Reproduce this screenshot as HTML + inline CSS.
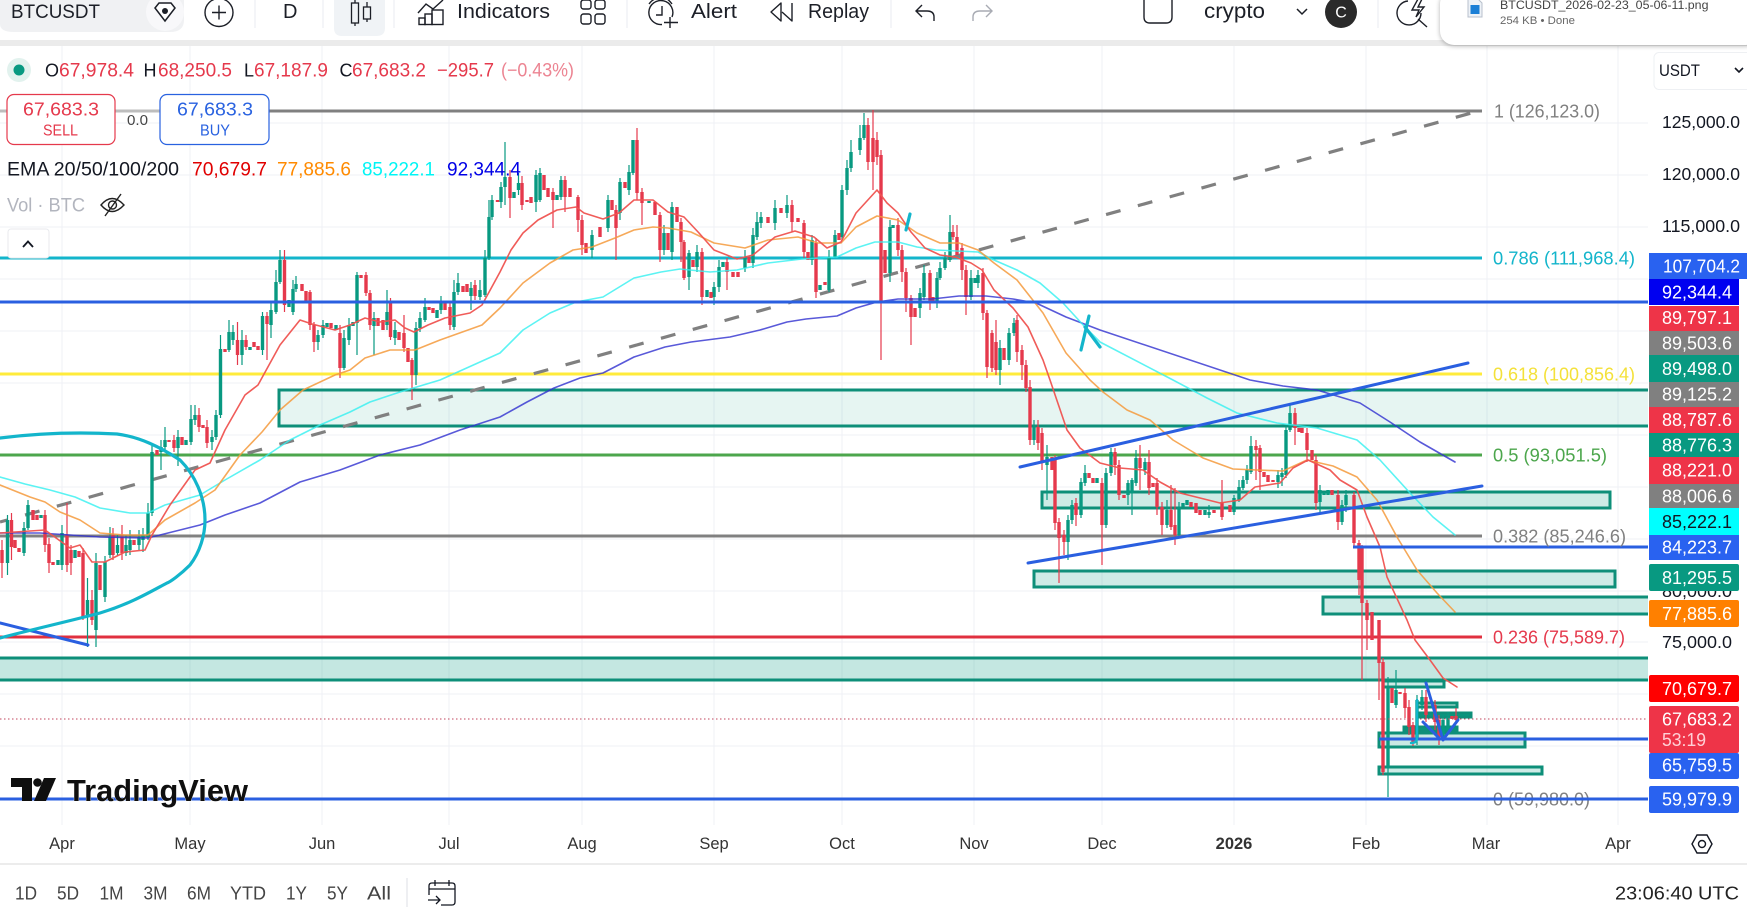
<!DOCTYPE html>
<html lang="en"><head><meta charset="utf-8"><title>BTCUSDT</title>
<style>
html,body{margin:0;padding:0;background:#fff;width:1747px;height:907px;overflow:hidden;font-family:"Liberation Sans",sans-serif}
svg{position:absolute;left:0;top:0}
text{font-family:"Liberation Sans",sans-serif;fill:#131722}
.ax{font-size:17.6px}.lb{font-size:18px;fill:#fff;font-weight:400}
.fib{font-size:18.5px}.leg{font-size:19px}.r{fill:#e5394c}
.tm{font-size:16.5px;fill:#333}.bt{font-size:18px;fill:#444}
.tb{font-size:20px;fill:#1c1f27}
#pop{position:absolute;left:1440px;top:-10px;width:320px;height:55px;background:#fff;border-radius:14px;box-shadow:0 1px 5px rgba(0,0,0,.3)}
#pop .a{position:absolute;left:60px;top:8px;font-size:12.4px;color:#444;white-space:nowrap}
#pop .b{position:absolute;left:60px;top:25px;font-size:11.4px;color:#666;white-space:nowrap}
</style></head><body>
<svg width="1747" height="907" viewBox="0 0 1747 907" xmlns="http://www.w3.org/2000/svg">
<rect width="1747" height="907" fill="#fff"/>
<!-- grid -->
<path stroke="#eff1f5" stroke-width="1" fill="none" d="M62 46V825M190 46V825M322 46V825M449 46V825M582 46V825M714 46V825M842 46V825M974 46V825M1102 46V825M1234 46V825M1366 46V825M1487 46V825M1618 46V825M0 123H1648M0 175H1648M0 227H1648M0 279H1648M0 331H1648M0 383H1648M0 435H1648M0 487H1648M0 539H1648M0 591H1648M0 642H1648M0 694H1648M0 746H1648"/>
<!-- top bar band -->
<rect x="0" y="40" width="1747" height="6" fill="#ebebeb"/>
<path d="M0 0H184V20Q184 32 170 32H14Q0 32 0 24Z" fill="#f0f1f3"/>
<!-- fib lines -->
<g fill="none" stroke-width="3">
<path d="M0 111H7M115 111H160" stroke="#bdbdbd"/>
<path d="M269 111H1482" stroke="#808080"/>
<path d="M0 258H1482" stroke="#13b5cb"/>
<path d="M0 374H1482" stroke="#ffeb3b"/>
<path d="M0 455H1482" stroke="#4ca64c"/>
<path d="M0 536H1482" stroke="#808080"/>
<path d="M0 637H1482" stroke="#e0303f"/>
</g>
<!-- rects -->
<g stroke="#0e8f79" stroke-width="3">
<rect x="279" y="390" width="1371" height="36" fill="#089981" fill-opacity=".1"/>
<rect x="1042" y="492" width="568" height="16" fill="#089981" fill-opacity=".2"/>
<rect x="1034" y="571" width="581" height="16" fill="#089981" fill-opacity=".2"/>
<rect x="1323" y="597" width="327" height="17" fill="#089981" fill-opacity=".2"/>
<rect x="-5" y="658" width="1655" height="22" fill="#089981" fill-opacity=".24"/>
<rect x="1383" y="681" width="61" height="6" fill="#089981" fill-opacity=".2"/>
<rect x="1417" y="703" width="40" height="4" fill="#089981" fill-opacity=".2"/>
<rect x="1417" y="713" width="54" height="4" fill="#089981"/>
<rect x="1404" y="727" width="53" height="4" fill="#089981"/>
<rect x="1379" y="733" width="146" height="14" fill="#089981" fill-opacity=".22"/>
<rect x="1379" y="767" width="163" height="7" fill="#089981" fill-opacity=".2"/>
</g>
<path d="M0 522L1475 112" stroke="#808080" stroke-width="3.2" stroke-dasharray="15 18" stroke-dashoffset="7" fill="none"/>
<!-- wicks green -->
<path fill="none" stroke="#089981" stroke-width="1.2" d="M7.5 515V575M24 522V556M28 500V530M62 525V570M87.5 578V647M96 553V647M105 556V602M110 527V558M117.5 535V556M126 535V556M130 530V555M139 530V550M143 528V552M148 503V540M152 445V516M161 440V470M165 427V450M178 430V466M191 405V445M195 405V425M212 430V450M216 410V440M220.5 335V418M229 320V352M233 325V345M242 330V365M262.5 312V355M271 302V338M276 270V314M280 250V284M293 280V315M296 276V292M318 330V350M323 320V338M344 330V370M349 318V345M357 272V355M374 312V355M387 290V330M395 322V345M416 322V385M420 312V332M425 298V322M441 296V314M454 280V330M458 273V295M471 282V310M480 280V300M485 250V297M489 200V260M492 195V220M501 182V208M505 142V205M518.5 173V195M536 170V212M540 168V202M561 176V200M592 230V258M608 195V232M620 178V220M629 165V195M633 150V175M664 225V255M672 202V260M689 250V290M697 245V272M714 282V305M719 260V292M745 250V272M753 228V268M757 212V240M761 212V228M775 200V230M787 195V218M812 235V265M829 250V292M835 230V258M842 185V240M847 160V195M851 140V172M860 125V155M864 113V140M890 220V282M920 288V318M924 265V300M937 272V308M940 262V280M945 252V270M950 215V262M971 270V300M978 270V288M1000 340V385M1009 328V365M1014 318V336M1034 420V445M1047 445V500M1068 515V560M1072 500V524M1081 478V518M1085 465V486M1106 468V528M1111 448V476M1128 480V505M1132 478V515M1136 450V486M1145 458V475M1167 500V528M1179 502V538M1209 505V518M1234 495V515M1239 480V502M1243 476V490M1247 465V484M1251 436V474M1278 470V488M1282 468V486M1286 425V478M1290 405V432M1320 485V512M1342 500V525M1346 490V512M1396 670V708M1388 677V797M1417 695V745M1422 690V710M1443 715V740M1448 712V735"/>
<!-- wicks red -->
<path fill="none" stroke="#e5394c" stroke-width="1.2" d="M2 540V578M11.5 513V560M45 510V552M49 538V573M67 503V572M71 545V575M83 548V620M92 590V625M113 528V560M122 525V560M174 435V452M199 408V432M207 420V448M237.5 322V365M246 335V350M267 312V360M284.5 250V312M310 290V330M314 322V352M340 325V378M366 272V296M370 290V330M390.5 298V340M404 315V352M412 358V400M450 302V330M475 280V300M510 170V218M522 176V210M553 188V228M565 176V212M578 195V232M582 215V255M616 205V260M637 128V200M642 188V225M660 212V262M681 218V262M684 240V280M702 248V305M727 258V290M792 200V232M804 220V258M816 238V298M868 118V170M873 110V190M877 132V165M881 150V360M898 218V256M902 245V282M906 268V312M911 295V345M930 270V310M953 225V240M957 225V255M962 243V280M966 265V315M983 268V320M987 310V378M992 330V372M996 320V375M1017 315V362M1022 345V380M1026 360V392M1030 380V445M1038 420V450M1042 428V470M1055 455V530M1059 518V583M1064 530V555M1076 498V526M1102 478V565M1115 448V475M1119 460V500M1140 445V490M1149 450V495M1157 478V515M1162 502V535M1171 485V530M1175 488V545M1222 480V520M1256 440V480M1260 445V490M1295 408V445M1307 428V462M1316 455V510M1338 490V530M1354 492V548M1359 540V595M1362 545V680M1367 600V650M1379 620V700M1383 658V775M1405 688V718M1409 700V735M1413 722V746M1426 690V722M1435 700V730M1439 715V745M1456 708V724"/>
<!-- bodies green -->
<path fill="none" stroke="#089981" stroke-width="3.4" d="M7.5 520V563M24 528V553M28 505V528M41 515V518M58 560V565M62 533V565M75 550V558M87.5 600V617M96 563V630M105 562V597M110 537V555M117.5 545V553M126 545V553M130 540V550M139 537V545M143 535V540M148 513V537M152 452V513M161 447V452M165 440V447M178 437V448M186 440V445M191 419V442M195 415V420M212 437V442M216 415V437M220.5 349V415M229 332V350M233 332V340M242 340V355M250 347V350M262.5 316V350M271 310V325M276 282V312M280 260V282M289 300V307M293 289V312M296 284V289M318 335V342M323 325V335M327 323V327M336 325V330M344 338V368M349 325V340M353 322V326M357 275V323M374 318V326M387 312V325M395 330V338M416 328V375M420 318V328M425 307V320M437 310V318M441 303V310M454 292V327M458 283V292M471 288V296M480 290V297M485 258V295M489 217V258M492 200V217M501 187V202M505 177V187M514 192V198M518.5 183V190M536 175V202M540 173V200M557 195V200M561 180V197M592 235V250M608 200V228M620 182V213M629 172V190M633 140V173M649 201V203M664 233V250M672 207V252M689 253V277M697 252V267M707 290V297M714 287V297M719 267V287M723 262V267M745 257V268M753 235V263M757 222V237M761 217V223M775 208V223M787 205V213M812 240V260M820 285V290M829 257V290M835 235V257M842 190V237M847 168V190M851 152V168M860 138V150M864 125V138M890 227V273M893 225V228M920 293V308M924 273V297M937 278V303M940 268V278M945 258V268M950 232V260M971 278V297M975 278V283M978 275V283M1000 348V370M1009 333V360M1014 323V333M1034 427V440M1047 457V465M1068 520V542M1072 505V520M1081 482V515M1085 473V483M1097 478V483M1106 473V525M1111 452V473M1128 483V495M1132 480V493M1136 458V483M1145 462V470M1167 510V525M1179 507V535M1183 503V507M1187 500V505M1205 510V515M1209 512V515M1234 498V512M1239 487V500M1243 480V488M1247 470V480M1251 446V472M1278 475V482M1282 473V477M1286 430V475M1290 413V430M1320 490V502M1324 492V495M1328 490V495M1342 505V522M1346 495V505M1388 688V768M1396 690V705M1417 700V740M1422 697V705M1443 720V740M1448 717V730"/>
<!-- bodies red -->
<path fill="none" stroke="#e5394c" stroke-width="3.4" d="M2 550V563M11.5 520V547M15 540V548M19 548V552M33 510V520M37 515V520M45 515V545M49 544V563M53 562V565M67 535V565M71 550V563M79 551V557M83 553V617M92 600V620M100 565V590M113 535V555M122 537V553M134 540V545M157 450V455M169 440V442M174 440V448M182 437V445M199 415V427M203 425V428M207 427V443M225 349V352M237.5 340V355M246 340V347M254 342V347M258 346V350M267 316V324M284.5 260V305M302 284V291M306 291V303M310 292V325M314 325V342M331 323V328M340 333V368M361 275V278M366 275V293M370 293V325M378 318V326M383 320V330M390.5 303V337M399 332V340M404 333V348M408 348V362M412 360V375M429 307V310M433 308V313M445 303V310M450 307V325M463 286V292M467 284V292M475 285V296M497.5 200V202M510 177V198M522 183V205M527 200V202M531 197V203M544 175V190M548 188V197M553 192V200M565 180V197M570 188V197M578 197V220M582 220V245M586 243V253M600 227V237M612 200V210M616 210V228M625 182V188M637 140V193M642 192V203M655 202V215M660 215V250M668 233V250M677 207V222M681 222V242M684 242V278M693 260V267M702 252V297M711 292V298M727 262V272M733 272V277M738 272V277M749 257V263M768 217V223M781 208V213M792 205V222M798 218V222M804 223V252M808 252V260M816 243V292M825 282V285M839 233V240M868 125V162M873 138V162M877 140V157M881 155V302M885 250V273M898 225V250M902 250V272M906 272V298M911 298V317M915 308V317M930 273V303M933 297V303M953 232V237M957 237V255M962 248V270M966 270V297M983 273V313M987 313V367M992 333V368M996 342V370M1004 348V360M1017 320V352M1022 350V365M1026 365V388M1030 387V440M1038 427V443M1042 433V463M1052 457V470M1055 460V523M1059 522V538M1064 535V542M1076 503V515M1089 473V478M1093 478V483M1102 483V525M1115 452V465M1119 465V495M1124 495V498M1140 458V468M1149 462V488M1153 483V487M1157 483V507M1162 507V525M1171 510V527M1175 525V535M1191 502V507M1196 503V513M1200 510V515M1214 510V513M1222 502V517M1230 505V512M1256 446V450M1260 448V472M1264 472V477M1268 475V482M1273 480V482M1295 413V428M1299 428V432M1302 428V433M1307 433V450M1312 450V460M1316 460V503M1332 490V495M1338 495V522M1354 495V543M1359 543V580M1362 547V603M1367 603V620M1372 612V640M1379 620V663M1383 662V772M1392 688V703M1400 692V694M1405 693V708M1409 707V727M1413 725V743M1426 697V715M1435 705V722M1439 720V737M1452 716V719M1456 716V720"/>
<!-- EMAs -->
<g fill="none" stroke-width="1.6" stroke-linejoin="round" stroke-linecap="round">
<path stroke="#2f2fd0" stroke-opacity=".8" d="M0 533L40 533 70 535 100 537 148 538 200 525 225 515 260 503 300 482 340 470 380 455 420 445 460 430 500 417 527 402 554 388 580 378 603 373 634 357 665 347 691 342 730 337 760 330 787 322 806 319 837 316 856 308 877 302 898 299 932 299 959 296 986 296 1013 299 1036 303 1066 317 1100 330 1250 380 1283 386 1317 390 1360 403 1390 422 1420 442 1455 462"/>
<path stroke="#33f0f0" stroke-opacity=".8" d="M0 477L25 484 50 490 75 497 100 508 130 513 148 513 165 505 200 495 225 480 260 460 290 440 320 425 350 412 370 402 400 392 440 380 480 362 500 353 523 330 550 313 576 302 603 297 634 278 661 272 680 269 710 272 737 270 768 263 802 259 837 257 856 248 875 242 898 242 917 247 936 250 978 252 994 260 1017 270 1040 283 1063 303 1085 327 1100 342 1173 380 1207 398 1237 413 1277 423 1317 428 1357 440 1380 460 1410 493 1433 517 1455 535"/>
<path stroke="#f59a3c" stroke-opacity=".85" d="M0 485L30 497 45 502 60 512 80 520 100 533 125 535 148 535 165 520 195 503 215 490 240 455 262 432 280 410 303 390 335 375 350 370 365 358 390 350 415 350 440 340 482 325 500 308 523 283 550 263 573 250 592 247 615 238 634 230 653 227 668 228 691 232 714 243 745 248 768 240 798 237 818 243 841 243 856 227 877 216 898 220 917 233 940 243 959 243 978 250 994 263 1017 280 1043 313 1066 353 1090 380 1103 392 1127 410 1150 420 1173 440 1203 458 1233 469 1283 471 1307 460 1333 466 1357 477 1377 500 1397 537 1417 570 1437 593 1455 612"/>
<path stroke="#ef5350" stroke-opacity=".95" d="M0 533L45 530 70 548 80 545 92 562 105 562 125 552 145 550 152 535 170 505 195 470 210 463 225 430 245 395 258 385 280 345 300 320 312 324 335 330 350 325 365 318 380 322 395 320 405 328 414 332 428 325 445 318 470 313 482 305 500 272 511 250 523 233 538 220 557 210 576 207 584 213 603 219 619 213 634 200 653 200 668 212 684 217 699 233 714 250 737 259 753 255 775 237 795 231 814 237 827 248 841 242 856 213 877 190 887 203 898 213 911 232 925 248 940 255 955 257 971 263 982 270 994 290 1013 308 1028 327 1043 360 1050 380 1067 430 1080 448 1100 463 1120 468 1143 470 1160 482 1180 493 1200 498 1220 503 1240 500 1255 487 1280 483 1293 468 1308 460 1330 470 1340 480 1357 490 1367 517 1380 547 1387 577 1407 620 1415 640 1430 660 1443 678 1457 687"/>
</g>
<!-- blue lines & drawings -->
<g fill="none" stroke="#2a5fe0" stroke-width="3" stroke-linecap="round">
<path d="M0 302H1648M1353 547H1648M1379 739H1648M0 799H1648" stroke-linecap="butt"/>
<path d="M1020 467L1468 363M1028 563L1482 486M0 623L88 645"/>
<path d="M1426 683L1443 740M1423 722L1440 739M1445 737L1458 720"/>
</g>
<path d="M0 719H1648" stroke="#c2465e" stroke-width="1" stroke-dasharray="1.5 2.5"/>
<g fill="none" stroke="#13b5cb" stroke-width="3.2" stroke-linecap="round">
<path d="M0 438C40 433 80 432 117 434C140 437 160 447 180 460C195 475 205 497 205 520C205 535 200 552 190 565C180 575 170 582 167 583C150 592 130 604 100 613C70 621 30 630 0 638"/>
<path d="M1089 316L1081 350M1085 327L1100 347M910 214L906 230"/>
<path d="M1417 700V738Q1417 743 1411 743" stroke-width="2.4"/>
</g>
<!-- TV logo -->
<g fill="#0f0f0f">
<path d="M11 778H32V801H22V787H11Z"/><circle cx="37.5" cy="782.5" r="4.3"/><path d="M44 778H56L46 801H34Z"/>
<text x="67" y="801" font-size="30.5" font-weight="700" textLength="181" lengthAdjust="spacingAndGlyphs" style="fill:#0f0f0f;paint-order:stroke;stroke:#fff;stroke-width:.6px">TradingView</text>
</g>
<!-- axis whitening -->
<rect x="1648" y="46" width="99" height="780" fill="#fff"/>
<rect x="0" y="826" width="1747" height="81" fill="#fff"/>
<path d="M0 864H1747" stroke="#e6e6e6" stroke-width="1.5"/>
<!-- toolbar -->
<circle cx="165" cy="12" r="19" fill="#f8f8fa"/>
<path d="M155 8L159 3H171L175 8L165 21Z" fill="#fff" stroke="#1c1f27" stroke-width="1.5"/><circle cx="165" cy="11" r="3" fill="#1c1f27"/>
<text x="11" y="18" style="font-size:19px" class="tb" textLength="89" lengthAdjust="spacingAndGlyphs">BTCUSDT</text>
<circle cx="219" cy="12.5" r="14" fill="none" stroke="#1c1f27" stroke-width="1.4"/><path d="M219 5.5V19.5M212 12.5H226" stroke="#1c1f27" stroke-width="1.4"/>
<path d="M255 0V28M323 0V28M394 0V28M891 0V28M1378 0V28" stroke="#eceef2" stroke-width="1.2"/>
<text x="283" y="18" class="tb">D</text>
<path d="M334 0H385V28Q385 36 377 36H342Q334 36 334 28Z" fill="#f0f3f6"/>
<path d="M355 0V26M367 2V22" stroke="#1c1f27" stroke-width="1.3"/><rect x="351.5" y="3" width="7" height="20" fill="#f0f3f6" stroke="#1c1f27" stroke-width="1.3"/><rect x="363.5" y="7" width="7" height="12" fill="#f0f3f6" stroke="#1c1f27" stroke-width="1.3"/>
<g fill="none" stroke="#1c1f27" stroke-width="1.4"><path d="M418 13L426 4L433 9L443 0"/><rect x="419" y="18" width="6" height="6.5"/><rect x="425" y="14" width="7" height="10.5"/><rect x="432" y="10" width="11" height="14.5"/></g>
<text x="457" y="18" class="tb" textLength="93" lengthAdjust="spacingAndGlyphs">Indicators</text>
<g fill="none" stroke="#1c1f27" stroke-width="1.4"><rect x="581" y="0" width="10" height="9" rx="2.5"/><rect x="595" y="0" width="10" height="9" rx="2.5"/><rect x="581" y="14" width="10" height="10" rx="2.5"/><rect x="595" y="14" width="10" height="10" rx="2.5"/></g>
<path d="M627 0V28" stroke="#eceef2" stroke-width="1.2"/>
<g fill="none" stroke="#1c1f27" stroke-width="1.4"><path d="M672 17A12 12 0 1 0 662 24.5"/><path d="M662 6V15H656"/><path d="M649 4Q652 0 655 -1M672 4Q669 0 667 -1"/><path d="M670 17V28M664 22.5H678"/></g>
<text x="691" y="18" class="tb" textLength="46" lengthAdjust="spacingAndGlyphs">Alert</text>
<g fill="none" stroke="#1c1f27" stroke-width="1.4" stroke-linejoin="round"><path d="M781 3V21L771 12Z"/><path d="M792 3V21L782 12"/></g>
<text x="808" y="18" class="tb" textLength="61" lengthAdjust="spacingAndGlyphs">Replay</text>
<path d="M934 21V17Q934 11 927 11H917M922 5L916 11L922 17" fill="none" stroke="#1c1f27" stroke-width="1.4"/>
<path d="M973 21V17Q973 11 980 11H991M986 5L992 11L986 17" fill="none" stroke="#a8abb3" stroke-width="1.4"/>
<path d="M1144 -2V17Q1144 23 1150 23H1166Q1172 23 1172 17V-2" fill="none" stroke="#1c1f27" stroke-width="1.4"/>
<text x="1204" y="18" class="tb" style="font-size:21px" textLength="61" lengthAdjust="spacingAndGlyphs">crypto</text>
<path d="M1297 9L1302 14L1307 9" fill="none" stroke="#1c1f27" stroke-width="1.5"/>
<circle cx="1341" cy="12" r="16" fill="#2a2a2a"/><text x="1341" y="17.500" text-anchor="middle" font-size="16" style="fill:#fff">C</text>
<g fill="none" stroke="#1c1f27" stroke-width="1.4"><path d="M1408 1A12 12 0 1 0 1421 13"/><path d="M1418 -1L1412 10H1419L1416 17L1424 7H1418L1422 -1"/><path d="M1418 19L1427 27"/></g>
<!-- legend -->
<circle cx="19" cy="70" r="12" fill="#e2f2ee"/><circle cx="19" cy="70" r="5.5" fill="#089981"/>
<text x="45" y="76.500" class="leg" style="font-size:18px">O</text><text x="59" y="76.500" class="leg r" textLength="75" lengthAdjust="spacingAndGlyphs">67,978.4</text>
<text x="143.500" y="76.500" class="leg" style="font-size:18px">H</text><text x="158" y="76.500" class="leg r" textLength="74" lengthAdjust="spacingAndGlyphs">68,250.5</text>
<text x="244" y="76.500" class="leg" style="font-size:18px">L</text><text x="254" y="76.500" class="leg r" textLength="74" lengthAdjust="spacingAndGlyphs">67,187.9</text>
<text x="339.500" y="76.500" class="leg" style="font-size:18px">C</text><text x="352" y="76.500" class="leg r" textLength="74" lengthAdjust="spacingAndGlyphs">67,683.2</text>
<text x="437" y="76.500" class="leg r" textLength="57" lengthAdjust="spacingAndGlyphs">−295.7</text><text x="501" y="76.500" class="leg r" textLength="73" lengthAdjust="spacingAndGlyphs" style="fill:#ec8492">(−0.43%)</text>
<rect x="7" y="94.500" width="108" height="50" rx="7" fill="#fff" stroke="#e5394c" stroke-width="1.2"/>
<text x="23" y="115.500" font-size="18.5" textLength="76" lengthAdjust="spacingAndGlyphs" class="r">67,683.3</text>
<text x="43" y="135.500" font-size="15.500" textLength="35" lengthAdjust="spacingAndGlyphs" class="r">SELL</text>
<text x="127" y="125" font-size="14.500" textLength="21" lengthAdjust="spacingAndGlyphs" style="fill:#444">0.0</text>
<rect x="160" y="94.500" width="109" height="50" rx="7" fill="#fff" stroke="#2962e0" stroke-width="1.2"/>
<text x="177" y="115.500" font-size="18.5" textLength="76" lengthAdjust="spacingAndGlyphs" style="fill:#2962e0">67,683.3</text>
<text x="200" y="135.500" font-size="15.500" textLength="30" lengthAdjust="spacingAndGlyphs" style="fill:#2962e0">BUY</text>
<text x="7" y="175.500" class="leg" textLength="172" lengthAdjust="spacingAndGlyphs">EMA 20/50/100/200</text>
<text x="192" y="175.500" class="leg" textLength="75" lengthAdjust="spacingAndGlyphs" style="fill:#e00000">70,679.7</text>
<text x="277" y="175.500" class="leg" textLength="74" lengthAdjust="spacingAndGlyphs" style="fill:#ff8a00">77,885.6</text>
<text x="362" y="175.500" class="leg" textLength="73" lengthAdjust="spacingAndGlyphs" style="fill:#00f5f5">85,222.1</text>
<text x="447" y="175.500" class="leg" textLength="74" lengthAdjust="spacingAndGlyphs" style="fill:#0000e6">92,344.4</text>
<text x="7" y="211.500" class="leg" textLength="78" lengthAdjust="spacingAndGlyphs" style="fill:#b2b5be">Vol · BTC</text>
<g fill="none" stroke="#222" stroke-width="1.4"><path d="M101 205Q112 192 124 205Q112 218 101 205Z"/><circle cx="112.500" cy="205" r="4"/><path d="M105 216L121 194"/></g>
<rect x="8" y="229" width="41" height="29" rx="3" fill="#fff" stroke="#e8eaee"/>
<path d="M23 247L28 241.500L33 247" fill="none" stroke="#131722" stroke-width="1.8"/>
<!-- fib labels -->
<text x="1494" y="117.500" class="fib" textLength="106" lengthAdjust="spacingAndGlyphs" style="fill:#808080">1 (126,123.0)</text>
<text x="1493" y="264.500" class="fib" textLength="142" lengthAdjust="spacingAndGlyphs" style="fill:#13b5cb">0.786 (111,968.4)</text>
<text x="1493" y="380.500" class="fib" textLength="142" lengthAdjust="spacingAndGlyphs" style="fill:#f4e13a">0.618 (100,856.4)</text>
<text x="1493" y="461.500" class="fib" textLength="114" lengthAdjust="spacingAndGlyphs" style="fill:#4ca64c">0.5 (93,051.5)</text>
<text x="1493" y="542.500" class="fib" textLength="133" lengthAdjust="spacingAndGlyphs" style="fill:#808080">0.382 (85,246.6)</text>
<text x="1493" y="643.500" class="fib" textLength="132" lengthAdjust="spacingAndGlyphs" style="fill:#e5394c">0.236 (75,589.7)</text>
<text x="1493" y="805.500" class="fib" textLength="97" lengthAdjust="spacingAndGlyphs" style="fill:#808080">0 (59,980.0)</text>
<path d="M1493 799H1590" stroke="#2a5fe0" stroke-width="3"/>
<!-- price axis -->
<rect x="1654" y="52.500" width="100" height="37" rx="5" fill="#fff" stroke="#eef0f3"/>
<text x="1659" y="76" font-size="17" textLength="41" lengthAdjust="spacingAndGlyphs">USDT</text>
<path d="M1735 68L1739 72L1743 68" fill="none" stroke="#131722" stroke-width="1.6"/>
<text x="1662" y="128" class="ax" textLength="78" lengthAdjust="spacingAndGlyphs">125,000.0</text>
<text x="1662" y="180" class="ax" textLength="78" lengthAdjust="spacingAndGlyphs">120,000.0</text>
<text x="1662" y="232" class="ax" textLength="78" lengthAdjust="spacingAndGlyphs">115,000.0</text>
<text x="1662" y="597" class="ax" textLength="70" lengthAdjust="spacingAndGlyphs">80,000.0</text>
<text x="1662" y="648" class="ax" textLength="70" lengthAdjust="spacingAndGlyphs">75,000.0</text>
<g>
<rect x="1649" y="253" width="98" height="26" fill="#2962f0"/><text x="1663" y="272.500" class="lb" textLength="77" lengthAdjust="spacingAndGlyphs">107,704.2</text>
<rect x="1649" y="279" width="90" height="26" fill="#0000f0"/><text x="1662" y="298.500" class="lb" textLength="70" lengthAdjust="spacingAndGlyphs">92,344.4</text>
<rect x="1649" y="306" width="90" height="25" fill="#ee3448"/><text x="1662" y="324" class="lb" textLength="70" lengthAdjust="spacingAndGlyphs">89,797.1</text>
<rect x="1649" y="331" width="90" height="24" fill="#808080"/><text x="1662" y="349.500" class="lb" textLength="70" lengthAdjust="spacingAndGlyphs">89,503.6</text>
<rect x="1649" y="355" width="90" height="27" fill="#089981"/><text x="1662" y="375" class="lb" textLength="70" lengthAdjust="spacingAndGlyphs">89,498.0</text>
<rect x="1649" y="382" width="90" height="25" fill="#808080"/><text x="1662" y="400.500" class="lb" textLength="70" lengthAdjust="spacingAndGlyphs">89,125.2</text>
<rect x="1649" y="407" width="90" height="26" fill="#ee3448"/><text x="1662" y="426" class="lb" textLength="70" lengthAdjust="spacingAndGlyphs">88,787.6</text>
<rect x="1649" y="433" width="90" height="24" fill="#089981"/><text x="1662" y="451.500" class="lb" textLength="70" lengthAdjust="spacingAndGlyphs">88,776.3</text>
<rect x="1649" y="457" width="90" height="27" fill="#ee3448"/><text x="1662" y="476.500" class="lb" textLength="70" lengthAdjust="spacingAndGlyphs">88,221.0</text>
<rect x="1649" y="484" width="90" height="24" fill="#808080"/><text x="1662" y="502.500" class="lb" textLength="70" lengthAdjust="spacingAndGlyphs">88,006.6</text>
<rect x="1649" y="508" width="90" height="27" fill="#00ffff"/><text x="1662" y="528" class="lb" textLength="70" lengthAdjust="spacingAndGlyphs" style="fill:#131722">85,222.1</text>
<rect x="1649" y="535" width="90" height="25" fill="#2962f0"/><text x="1662" y="553.500" class="lb" textLength="70" lengthAdjust="spacingAndGlyphs">84,223.7</text>
<rect x="1649" y="564" width="90" height="27" rx="2" fill="#089981"/><text x="1662" y="584" class="lb" textLength="70" lengthAdjust="spacingAndGlyphs">81,295.5</text>
<rect x="1649" y="600" width="90" height="27" rx="2" fill="#ff8000"/><text x="1662" y="620" class="lb" textLength="70" lengthAdjust="spacingAndGlyphs">77,885.6</text>
<rect x="1649" y="675" width="90" height="27" rx="2" fill="#ff0000"/><text x="1662" y="695" class="lb" textLength="70" lengthAdjust="spacingAndGlyphs">70,679.7</text>
<rect x="1649" y="706" width="90" height="47" rx="2" fill="#ee3448"/><text x="1662" y="725.500" class="lb" textLength="70" lengthAdjust="spacingAndGlyphs">67,683.2</text><text x="1662" y="746" class="lb" textLength="44" lengthAdjust="spacingAndGlyphs" style="fill:#ffd0d6">53:19</text>
<rect x="1649" y="753" width="90" height="26" rx="2" fill="#2962f0"/><text x="1662" y="771.500" class="lb" textLength="70" lengthAdjust="spacingAndGlyphs">65,759.5</text>
<rect x="1649" y="786" width="90" height="27" rx="2" fill="#2962f0"/><text x="1662" y="805.500" class="lb" textLength="70" lengthAdjust="spacingAndGlyphs">59,979.9</text>
</g>
<!-- time axis -->
<g text-anchor="middle">
<text x="62" y="849" class="tm">Apr</text><text x="190" y="849" class="tm">May</text><text x="322" y="849" class="tm">Jun</text><text x="449" y="849" class="tm">Jul</text><text x="582" y="849" class="tm">Aug</text><text x="714" y="849" class="tm">Sep</text><text x="842" y="849" class="tm">Oct</text><text x="974" y="849" class="tm">Nov</text><text x="1102" y="849" class="tm">Dec</text><text x="1234" y="849" class="tm" font-weight="700">2026</text><text x="1366" y="849" class="tm">Feb</text><text x="1486" y="849" class="tm">Mar</text><text x="1618" y="849" class="tm">Apr</text>
</g>
<path d="M1692 844L1697 835H1707L1712 844L1707 853H1697Z" fill="none" stroke="#131722" stroke-width="1.4"/><circle cx="1702" cy="844" r="3.5" fill="none" stroke="#131722" stroke-width="1.4"/>
<!-- bottom -->
<text x="15" y="899.500" class="bt" textLength="22" lengthAdjust="spacingAndGlyphs">1D</text><text x="57" y="899.500" class="bt" textLength="22" lengthAdjust="spacingAndGlyphs">5D</text><text x="99.500" y="899.500" class="bt" textLength="24" lengthAdjust="spacingAndGlyphs">1M</text><text x="143.500" y="899.500" class="bt" textLength="24" lengthAdjust="spacingAndGlyphs">3M</text><text x="187" y="899.500" class="bt" textLength="24" lengthAdjust="spacingAndGlyphs">6M</text><text x="230" y="899.500" class="bt" textLength="36" lengthAdjust="spacingAndGlyphs">YTD</text><text x="286" y="899.500" class="bt" textLength="21" lengthAdjust="spacingAndGlyphs">1Y</text><text x="327" y="899.500" class="bt" textLength="21" lengthAdjust="spacingAndGlyphs">5Y</text><text x="367" y="899.500" class="bt" textLength="24" lengthAdjust="spacingAndGlyphs">All</text>
<path d="M407 878V907" stroke="#e2e4e8" stroke-width="1.2"/>
<g fill="none" stroke="#131722" stroke-width="1.3"><path d="M429 895V886Q429 883 432 883H452Q455 883 455 886V902Q455 905 452 905H441"/><path d="M429 889H455M435 880V886M449 880V886"/><path d="M428 900H440M436 896L440 900L436 904"/></g>
<text x="1615" y="899.500" font-size="18.5" textLength="124" lengthAdjust="spacingAndGlyphs" style="fill:#222">23:06:40 UTC</text>
</svg>
<div id="pop"><svg width="16" height="20" style="left:27px;top:8px;position:absolute"><path d="M1 1H11L15 5V19H1Z" fill="#eef2f7" stroke="#b8c0cc"/><rect x="3.500" y="7" width="9" height="9" fill="#1b7fd6"/></svg><div class="a">BTCUSDT_2026-02-23_05-06-11.png</div><div class="b">254 KB • Done</div></div>
</body></html>
